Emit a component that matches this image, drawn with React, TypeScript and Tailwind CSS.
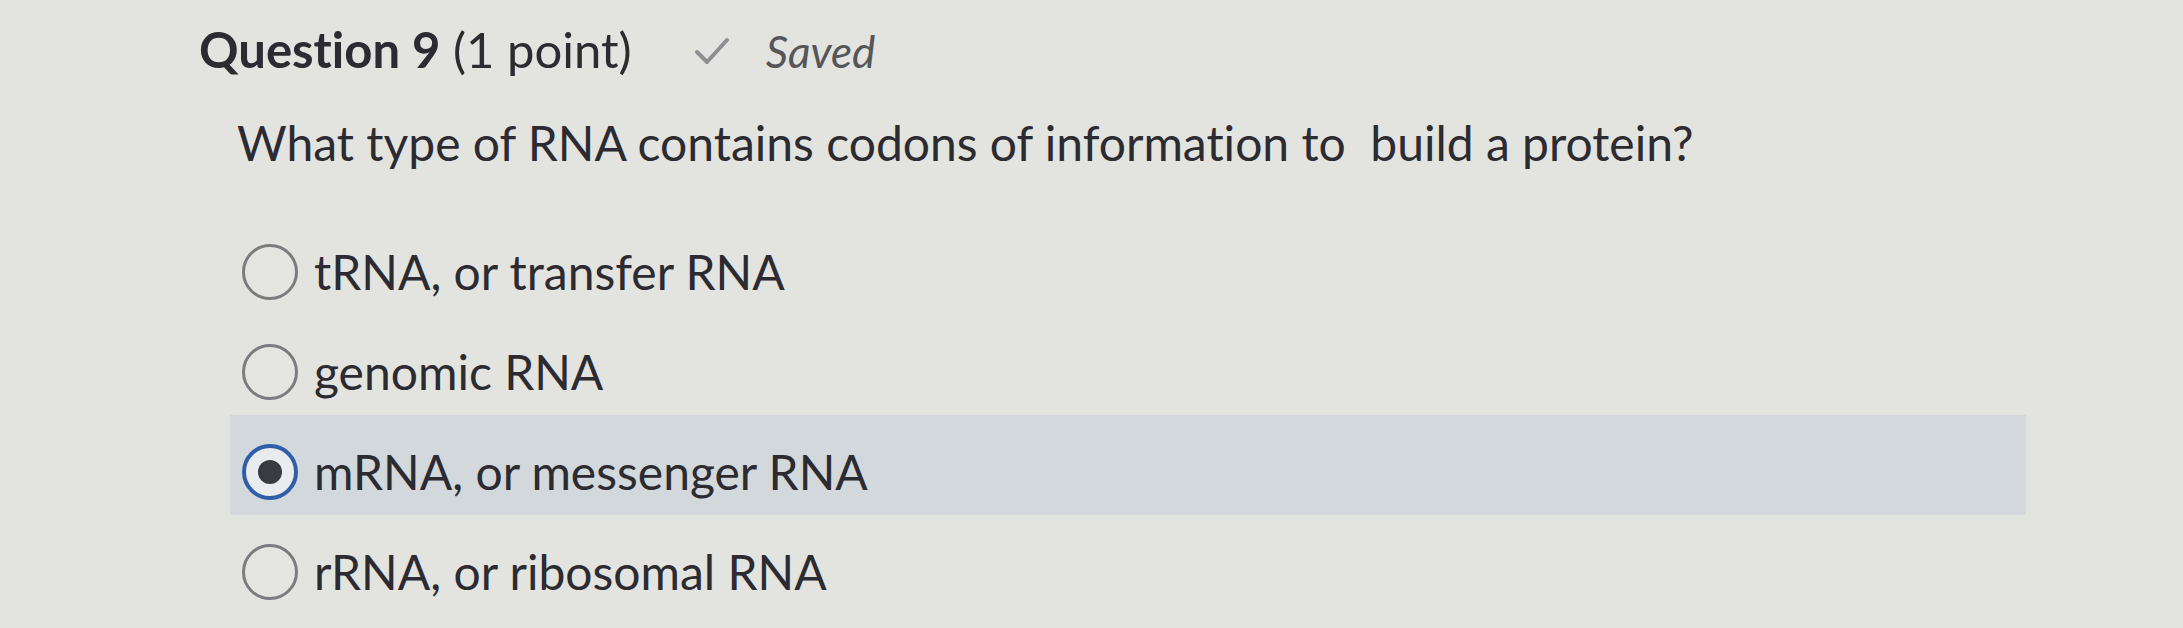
import { useState } from "react"

const options = [
  "tRNA, or transfer RNA",
  "genomic RNA",
  "mRNA, or messenger RNA",
  "rRNA, or ribosomal RNA",
]

function Radio({ checked }: { checked: boolean }) {
  if (checked) {
    return (
      <span className="flex h-[56px] w-[56px] shrink-0 items-center justify-center rounded-full border-[4px] border-[#2f5fa8] bg-[#e9ecee]">
        <span className="h-[24px] w-[24px] rounded-full bg-[#3a3b40]" />
      </span>
    )
  }
  return <span className="h-[56px] w-[56px] shrink-0 rounded-full border-[3px] border-[#7b7c80] bg-[#e4e4e0]" />
}

export default function App() {
  const [selected, setSelected] = useState(2)

  return (
    <div className="h-[628px] w-[2183px] overflow-hidden bg-[#e3e3df] font-['Lato',sans-serif] text-[#2b2b31] [font-variant-ligatures:none]">
      <div className="pl-[199px] pt-[17px]">
        <div className="flex items-baseline">
          <h2 className="text-[49px] leading-[64px]">
            <span className="font-bold">Question 9</span> (1 point)
          </h2>
          <span className="ml-[62px] flex items-baseline gap-[36px] text-[#55565a]">
            <svg width="36" height="30" viewBox="0 0 36 30" className="self-center text-[#8e8f92]">
              <path d="M3 16 L13 26 L33 4" fill="none" stroke="currentColor" strokeWidth="4" strokeLinecap="round" strokeLinejoin="round" />
            </svg>
            <span className="text-[44px] italic">Saved</span>
          </span>
        </div>

        <p className="mt-[30px] pl-[38px] text-[48px] leading-[58px] whitespace-pre">
          What type of RNA contains codons of information to  build a protein?
        </p>

        <ul className="mt-[43px] pr-[157px]">
          {options.map((label, i) => (
            <li
              key={label}
              onClick={() => setSelected(i)}
              className={`ml-[31px] flex h-[100px] cursor-pointer items-center gap-[16px] pl-[12px] pt-[14px] ${selected === i ? "bg-[#d2d8db]" : ""}`}
            >
              <Radio checked={selected === i} />
              <span className="text-[48px]">{label}</span>
            </li>
          ))}
        </ul>
      </div>
    </div>
  )
}
